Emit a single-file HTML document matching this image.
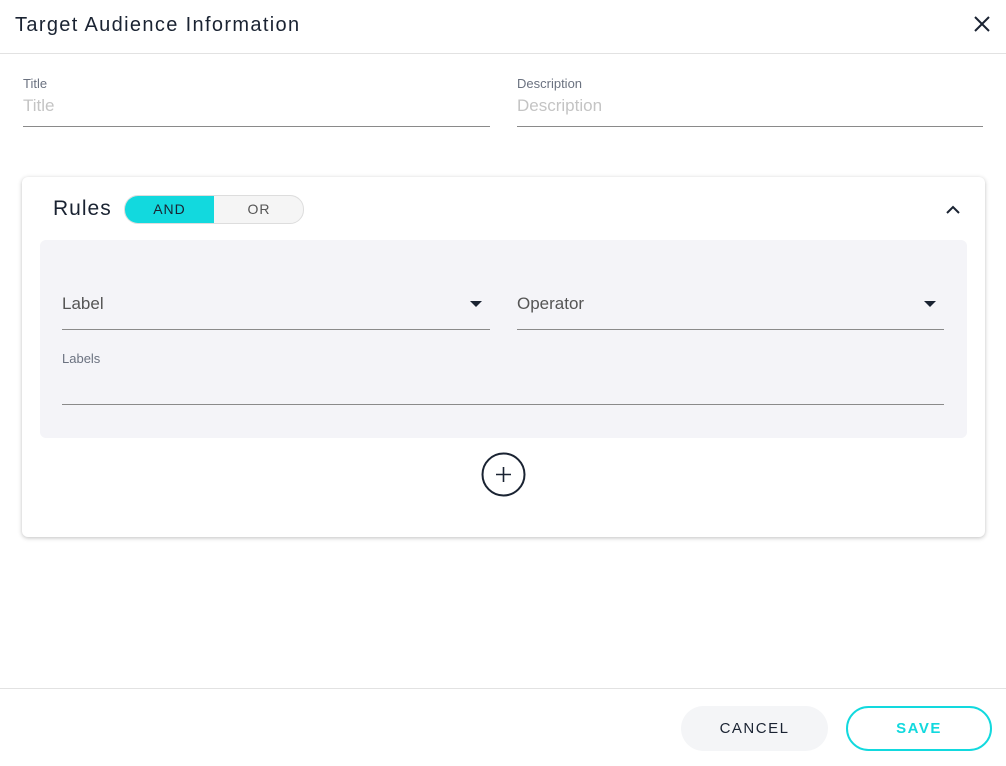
<!DOCTYPE html>
<html><head><style>
*{box-sizing:border-box;margin:0;padding:0}
body{width:1006px;height:766px;background:#fff;font-family:"Liberation Sans",sans-serif;position:relative;overflow:hidden;color:#1a2332}
.abs{position:absolute}
</style></head><body>
<div class="abs" style="left:15px;top:14px;font-size:20px;color:#1a2332;letter-spacing:1.35px">Target Audience Information</div>
<svg class="abs" style="left:973px;top:15px" width="18" height="18" viewBox="0 0 18 18"><path d="M2 2L16 16M16 2L2 16" stroke="#1a2332" stroke-width="2"/></svg>
<div class="abs" style="left:0;top:53px;width:1006px;height:1px;background:#e2e2e2"></div>

<div class="abs" style="left:23px;top:76px;font-size:13px;color:#6b7280">Title</div>
<div class="abs" style="left:23px;top:96px;font-size:17px;color:#c4c4c4">Title</div>
<div class="abs" style="left:23px;top:126px;width:467px;height:1px;background:#8a8a8a"></div>
<div class="abs" style="left:517px;top:76px;font-size:13px;color:#6b7280">Description</div>
<div class="abs" style="left:517px;top:96px;font-size:17px;color:#c4c4c4">Description</div>
<div class="abs" style="left:517px;top:126px;width:466px;height:1px;background:#8a8a8a"></div>

<div class="abs" style="left:22px;top:177px;width:963px;height:360px;border-radius:6px;background:#fff;box-shadow:0 1px 4px rgba(0,0,0,0.25)"></div>
<div class="abs" style="left:53px;top:197px;font-size:21px;color:#1a2332;letter-spacing:1px">Rules</div>
<div class="abs" style="left:124px;top:195px;width:180px;height:29px;border-radius:14px;background:#f5f5f5;border:1px solid #ddd;overflow:hidden">
 <div class="abs" style="left:0;top:0;width:89px;height:27px;background:#12d9de;text-align:center;line-height:27px;font-size:14px;letter-spacing:1px;color:#1a2332">AND</div>
 <div class="abs" style="left:89px;top:0;width:90px;height:27px;text-align:center;line-height:27px;font-size:14px;letter-spacing:1px;color:#555">OR</div>
</div>
<svg class="abs" style="left:945px;top:204px" width="16" height="12" viewBox="0 0 16 12"><path d="M2 9L8 3L14 9" stroke="#1a2332" stroke-width="2" fill="none"/></svg>

<div class="abs" style="left:40px;top:240px;width:927px;height:198px;border-radius:6px;background:#f4f4f8"></div>
<div class="abs" style="left:62px;top:294px;font-size:17px;color:#555">Label</div>
<svg class="abs" style="left:470px;top:301px" width="12" height="7"><path d="M0 0H12L6 6Z" fill="#1a2332"/></svg>
<div class="abs" style="left:62px;top:329px;width:428px;height:1px;background:#8a8a8a"></div>
<div class="abs" style="left:517px;top:294px;font-size:17px;color:#555">Operator</div>
<svg class="abs" style="left:924px;top:301px" width="12" height="7"><path d="M0 0H12L6 6Z" fill="#1a2332"/></svg>
<div class="abs" style="left:517px;top:329px;width:427px;height:1px;background:#8a8a8a"></div>
<div class="abs" style="left:62px;top:351px;font-size:13px;color:#6b7280">Labels</div>
<div class="abs" style="left:62px;top:404px;width:882px;height:1px;background:#8a8a8a"></div>

<svg class="abs" style="left:481px;top:452px" width="46" height="46" viewBox="0 0 46 46"><circle cx="22.5" cy="22.5" r="21" stroke="#1a2332" stroke-width="2" fill="none"/><path d="M22.5 15V30M15 22.5H30" stroke="#1a2332" stroke-width="1.6"/></svg>

<div class="abs" style="left:0;top:688px;width:1006px;height:1px;background:#e2e2e2"></div>
<div class="abs" style="left:681px;top:706px;width:147px;height:45px;border-radius:23px;background:#f4f5f7;text-align:center;line-height:45px;font-size:15px;letter-spacing:1.5px;color:#1a2332">CANCEL</div>
<div class="abs" style="left:846px;top:706px;width:146px;height:45px;border-radius:23px;border:2px solid #12d9de;text-align:center;line-height:41px;font-size:15px;letter-spacing:1.5px;color:#12d9de;font-weight:600">SAVE</div>
</body></html>
